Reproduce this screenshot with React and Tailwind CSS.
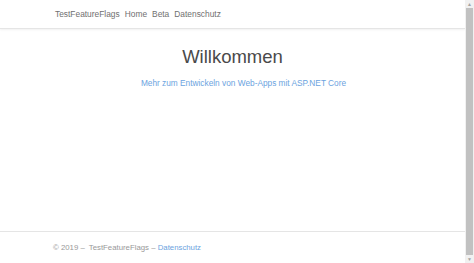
import React from "react";

export default function App() {
  return (
    <div className="flex h-[263px] w-[474px] overflow-hidden bg-white" style={{ fontFamily: '"Liberation Sans", Arial, sans-serif' }}>
      <div className="flex w-[465px] flex-col">
        <nav className="flex h-[29px] shrink-0 items-center gap-[5px] border-b border-[#e5e5e5] pl-[55px] pt-[1px] text-[8.4px] text-[#707070] shadow-[0_1px_2px_rgba(0,0,0,0.06)]">
          <span>TestFeatureFlags</span>
          <span>Home</span>
          <span>Beta</span>
          <span>Datenschutz</span>
        </nav>
        <main className="flex flex-1 flex-col items-center">
          <h1 className="mt-[16px] text-[18.5px] leading-[24px] font-light text-[#4a4a4a]">Willkommen</h1>
          <p className="mt-[8px] pl-[22px] text-[8.3px] leading-[12px] text-[#6ba3e0]">
            Mehr zum Entwickeln von Web-Apps mit ASP.NET Core
          </p>
        </main>
        <footer className="flex h-[32px] shrink-0 items-center border-t border-[#e5e5e5] pl-[53px] pt-[1px] text-[7.8px] text-[#999] whitespace-pre">
          <span>© 2019 –</span>
          <span className="ml-[4px]">TestFeatureFlags – </span>
          <span className="text-[#6ba3e0]">Datenschutz</span>
        </footer>
      </div>
      <div className="flex w-[9px] flex-col bg-[#f1f1f1]">
        <div className="flex h-[8px] items-center justify-center text-[5px] leading-none text-[#a3a3a3]">▲</div>
        <div className="mx-[1px] flex-1 bg-[#c1c1c1]" />
        <div className="flex h-[8px] items-center justify-center text-[5px] leading-none text-[#a3a3a3]">▼</div>
      </div>
    </div>
  );
}
